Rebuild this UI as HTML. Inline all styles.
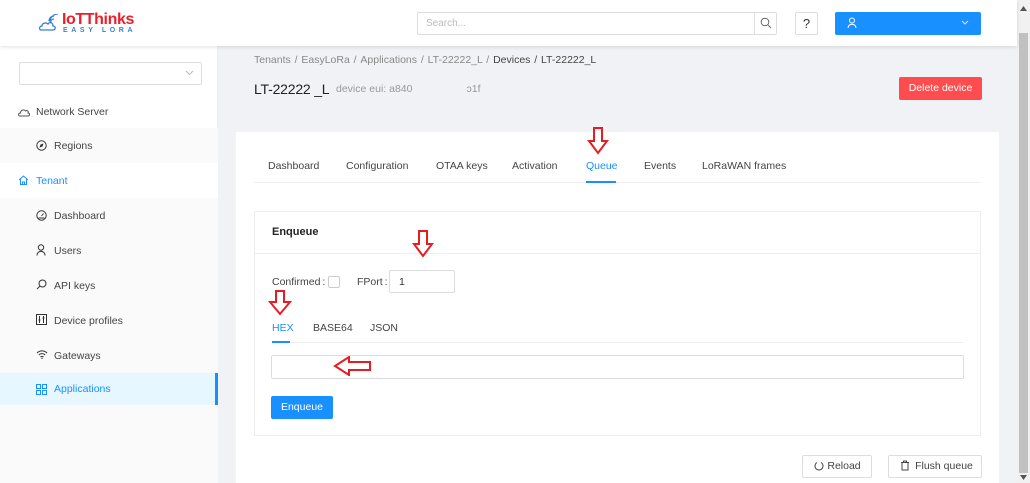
<!DOCTYPE html>
<html><head><meta charset="utf-8"><style>
*{box-sizing:border-box;margin:0;padding:0}
body{width:1030px;height:483px;overflow:hidden;background:#f0f2f5;font-family:"Liberation Sans",sans-serif;font-size:10.5px;color:#333;position:relative}
.a{position:absolute}
.hdr{left:0;top:0;width:1017px;height:46px;background:#fff;box-shadow:0 1px 4px rgba(0,0,0,.12);z-index:2}
.side{left:0;top:46px;width:218px;height:437px;background:#fff;border-right:1px solid #eee}
.row{position:absolute;left:0;width:218px;height:35px;line-height:36px;font-size:10.5px;color:#444}
.sub{background:#fafafa;padding-left:54px}
.tab{position:absolute;top:160px;font-size:10.5px;color:#444}
.btn{position:absolute;background:#fff;border:1px solid #ddd;border-radius:2px;font-size:10.5px;color:#444;text-align:center}
</style></head><body>
<div class="a hdr">
  <svg class="a" style="left:38px;top:14px" width="24" height="20" viewBox="0 0 24 20"><path d="M3 16 C1 16 1 12 4 12 C4 9 8 8 10 10 C11 8 15 8 15 12 C18 12 18 16 15 16 Z" fill="none" stroke="#3a7fd5" stroke-width="1.3"/><path d="M11 7 A5 5 0 0 1 16 2 M12 8 A8 8 0 0 1 20 0 M13 9 A3 3 0 0 1 16 5" fill="none" stroke="#3a7fd5" stroke-width="1.2"/></svg>
  <div class="a" style="left:62px;top:11px;font-size:16px;font-weight:bold;color:#e8212b;letter-spacing:-.4px">IoTThinks</div>
  <div class="a" style="left:63px;top:27px;font-size:7px;color:#3a7fd5;letter-spacing:3.6px;font-weight:bold">EASY LORA</div>
  <div class="a" style="left:417px;top:12px;width:338px;height:23px;border:1px solid #ddd;border-radius:2px;font-size:10px;color:#bbb;padding:5px 8px">Search...</div>
  <div class="a" style="left:754px;top:12px;width:23px;height:23px;border:1px solid #ddd;border-radius:0 2px 2px 0"></div>
  <svg class="a" style="left:760px;top:17px" width="12" height="12" viewBox="0 0 12 12"><circle cx="5" cy="5" r="3.8" fill="none" stroke="#666" stroke-width="1"/><path d="M8 8 L11 11" stroke="#666"/></svg>
  <div class="a" style="left:795px;top:12px;width:23px;height:23px;border:1px solid #ddd;border-radius:2px;text-align:center;line-height:21px;font-size:13px;color:#333">?</div>
  <div class="a" style="left:835px;top:12px;width:146px;height:23px;background:#1890ff;border-radius:2px"></div>
  <svg class="a" style="left:847px;top:17px" width="10" height="12" viewBox="0 0 10 12"><circle cx="5" cy="3.5" r="2.5" fill="none" stroke="#fff"/><path d="M1 11 C1 6 9 6 9 11" fill="none" stroke="#fff"/></svg>
  <svg class="a" style="left:961px;top:20px" width="8" height="6" viewBox="0 0 8 6"><path d="M1 1 L4 4 L7 1" fill="none" stroke="#cfe6ff"/></svg>
</div>
<div class="a side">
  <div class="a" style="left:19px;top:16px;width:183px;height:23px;border:1px solid #ddd;border-radius:2px"></div>
  <svg class="a" style="left:185px;top:24px" width="9" height="6" viewBox="0 0 9 6"><path d="M1 1 L4.5 4.5 L8 1" fill="none" stroke="#bbb"/></svg>
  <div class="row" style="top:48px;padding-left:36px">Network Server</div>
  <svg class="a" style="left:18px;top:62px" width="12" height="9" viewBox="0 0 12 9"><path d="M2 8 C0 8 0 5 2.5 5 C2.5 2 6 1 7.5 3 C9 2 11 3 10 5 C12 5 12 8 10 8 Z" fill="none" stroke="#555"/></svg>
</div>
<div class="row sub" style="top:128px">Regions</div>
<svg class="a" style="left:36px;top:140px" width="11" height="11" viewBox="0 0 11 11"><circle cx="5.5" cy="5.5" r="4.7" fill="none" stroke="#333"/><path d="M3.5 7.5 L4.5 4.5 L7.5 3.5 L6.5 6.5Z" fill="#333"/></svg>
<div class="row" style="top:163px;padding-left:36px;color:#1890ff;background:#fff">Tenant</div>
<svg class="a" style="left:18px;top:175px" width="11" height="10" viewBox="0 0 11 10"><path d="M1 5 L5.5 1 L10 5 M2.5 4 V9.5 H8.5 V4 M4.5 9.5 V7 H6.5 V9.5" fill="none" stroke="#1890ff"/></svg>
<div class="row sub" style="top:198px">Dashboard</div>
<svg class="a" style="left:36px;top:210px" width="11" height="11" viewBox="0 0 11 11"><circle cx="5.5" cy="5.5" r="4.7" fill="none" stroke="#333"/><path d="M5.5 6 L7.5 3.5 M2.5 8 H8.5" stroke="#333"/></svg>
<div class="row sub" style="top:233px">Users</div>
<svg class="a" style="left:36px;top:244px" width="10" height="12" viewBox="0 0 10 12"><circle cx="5" cy="3.5" r="2.7" fill="none" stroke="#333"/><path d="M1 11.5 C1 6 9 6 9 11.5" fill="none" stroke="#333"/></svg>
<div class="row sub" style="top:268px">API keys</div>
<svg class="a" style="left:36px;top:279px" width="11" height="11" viewBox="0 0 11 11"><circle cx="6.5" cy="4.5" r="3.5" fill="none" stroke="#333"/><path d="M4 7 L1 10" stroke="#333"/></svg>
<div class="row sub" style="top:303px">Device profiles</div>
<svg class="a" style="left:36px;top:314px" width="11" height="11" viewBox="0 0 11 11"><rect x=".5" y=".5" width="10" height="10" fill="none" stroke="#333"/><path d="M3.5 2 V9 M7.5 2 V9 M2.5 6 H4.5 M6.5 4 H8.5" stroke="#333"/></svg>
<div class="row sub" style="top:338px">Gateways</div>
<svg class="a" style="left:36px;top:350px" width="12" height="9" viewBox="0 0 12 9"><path d="M1 3 A7 7 0 0 1 11 3 M2.8 5 A4.5 4.5 0 0 1 9.2 5 M4.5 7 A2 2 0 0 1 7.5 7" fill="none" stroke="#333"/><circle cx="6" cy="8.3" r=".7" fill="#333"/></svg>
<div class="row sub" style="top:373px;background:#e6f7ff;color:#1890ff;border-right:3px solid #1890ff;height:32px;line-height:32px">Applications</div>
<svg class="a" style="left:36px;top:384px" width="11" height="11" viewBox="0 0 11 11"><g fill="none" stroke="#1890ff"><rect x=".5" y=".5" width="4" height="4"/><rect x="6.5" y=".5" width="4" height="4"/><rect x=".5" y="6.5" width="4" height="4"/><rect x="6.5" y="6.5" width="4" height="4"/></g></svg>
<div class="row sub" style="top:405px;height:78px"></div>

<div class="a" style="left:254px;top:54px;font-size:10.5px;color:#888;word-spacing:-1px">Tenants &nbsp;/ &nbsp;EasyLoRa &nbsp;/ &nbsp;Applications &nbsp;/ &nbsp;LT-22222_L &nbsp;/ &nbsp;<span style="color:#444">Devices &nbsp;/ &nbsp;LT-22222_L</span></div>
<div class="a" style="left:254px;top:81px;font-size:14px;color:#222;letter-spacing:-.2px">LT-22222 _L</div>
<div class="a" style="left:336px;top:83px;font-size:10.5px;color:#999">device eui: a840<span style="margin-left:54px">ɔ1f</span></div>
<div class="a" style="left:899px;top:77px;width:83px;height:23px;background:#ff4d4f;border-radius:2px;color:#fff;font-size:10.5px;text-align:center;line-height:23px">Delete device</div>

<div class="a" style="left:236px;top:132px;width:763px;height:351px;background:#fff"></div>
<div class="tab" style="left:268px">Dashboard</div>
<div class="tab" style="left:346px">Configuration</div>
<div class="tab" style="left:436px">OTAA keys</div>
<div class="tab" style="left:512px">Activation</div>
<div class="tab" style="left:586px;color:#1890ff">Queue</div>
<div class="tab" style="left:644px">Events</div>
<div class="tab" style="left:702px">LoRaWAN frames</div>
<div class="a" style="left:254px;top:182px;width:727px;height:1px;background:#eee"></div>
<div class="a" style="left:586px;top:181px;width:30px;height:2px;background:#1890ff"></div>

<div class="a" style="left:254px;top:211px;width:727px;height:225px;border:1px solid #eee"></div>
<div class="a" style="left:254px;top:253px;width:727px;height:1px;background:#eee"></div>
<div class="a" style="left:272px;top:226px;font-size:11px;font-weight:bold;color:#222">Enqueue</div>
<div class="a" style="left:272px;top:276px;color:#444;word-spacing:-1px">Confirmed :</div>
<div class="a" style="left:328px;top:276px;width:12px;height:12px;border:1px solid #ccc;border-radius:2px;background:#fff"></div>
<div class="a" style="left:357px;top:276px;color:#444;word-spacing:-1px">FPort :</div>
<div class="a" style="left:389px;top:270px;width:66px;height:23px;border:1px solid #ddd;border-radius:2px;padding:5px 9px;color:#333">1</div>
<div class="a" style="left:272px;top:322px;color:#1890ff">HEX</div>
<div class="a" style="left:313px;top:322px;color:#444">BASE64</div>
<div class="a" style="left:370px;top:322px;color:#444">JSON</div>
<div class="a" style="left:272px;top:342px;width:691px;height:1px;background:#eee"></div>
<div class="a" style="left:272px;top:341px;width:18px;height:2px;background:#1890ff"></div>
<div class="a" style="left:271px;top:355px;width:693px;height:24px;border:1px solid #ddd;border-radius:2px"></div>
<div class="a" style="left:271px;top:396px;width:62px;height:23px;background:#1890ff;border-radius:2px;color:#fff;text-align:center;line-height:23px">Enqueue</div>

<div class="btn" style="left:802px;top:455px;width:70px;height:23px;line-height:21px;padding-left:14px">Reload</div>
<svg class="a" style="left:814px;top:461px" width="10" height="10" viewBox="0 0 10 10"><path d="M3 1.5 A4 4 0 1 0 7 1.5" fill="none" stroke="#444"/></svg>
<div class="btn" style="left:888px;top:455px;width:94px;height:23px;line-height:21px;padding-left:18px">Flush queue</div>
<svg class="a" style="left:900px;top:460px" width="10" height="11" viewBox="0 0 10 11"><path d="M1 2.5 H9 M3.5 2.5 V1 H6.5 V2.5 M2 2.5 V10 H8 V2.5" fill="none" stroke="#444"/></svg>

<svg class="a" style="left:587px;top:127px" width="22" height="28" viewBox="0 0 22 28"><path d="M7 1 H15 V14 H20 L11 26 L2 14 H7 Z" fill="none" stroke="#e51c23" stroke-width="2"/></svg>
<svg class="a" style="left:412px;top:230px" width="22" height="28" viewBox="0 0 22 28"><path d="M7 1 H15 V14 H20 L11 26 L2 14 H7 Z" fill="none" stroke="#e51c23" stroke-width="2"/></svg>
<svg class="a" style="left:268px;top:290px" width="24" height="26" viewBox="0 0 24 26"><path d="M8 1 H16 V12 H22 L12 24 L2 12 H8 Z" fill="none" stroke="#e51c23" stroke-width="2"/></svg>
<svg class="a" style="left:333px;top:356px" width="38" height="20" viewBox="0 0 38 20"><path d="M37 6 V14 H16 V19 L2 10 L16 1 V6 Z" fill="none" stroke="#e51c23" stroke-width="2"/></svg>

<div class="a" style="left:1017px;top:0;width:13px;height:483px;background:#f1f1f1"></div>
<div class="a" style="left:1019px;top:33px;width:9px;height:440px;background:#c1c1c1"></div>
<svg class="a" style="left:1020px;top:6px" width="7" height="5" viewBox="0 0 7 5"><path d="M0 5 L3.5 0 L7 5Z" fill="#555"/></svg>
<svg class="a" style="left:1020px;top:475px" width="7" height="5" viewBox="0 0 7 5"><path d="M0 0 L3.5 5 L7 0Z" fill="#555"/></svg>
</body></html>
